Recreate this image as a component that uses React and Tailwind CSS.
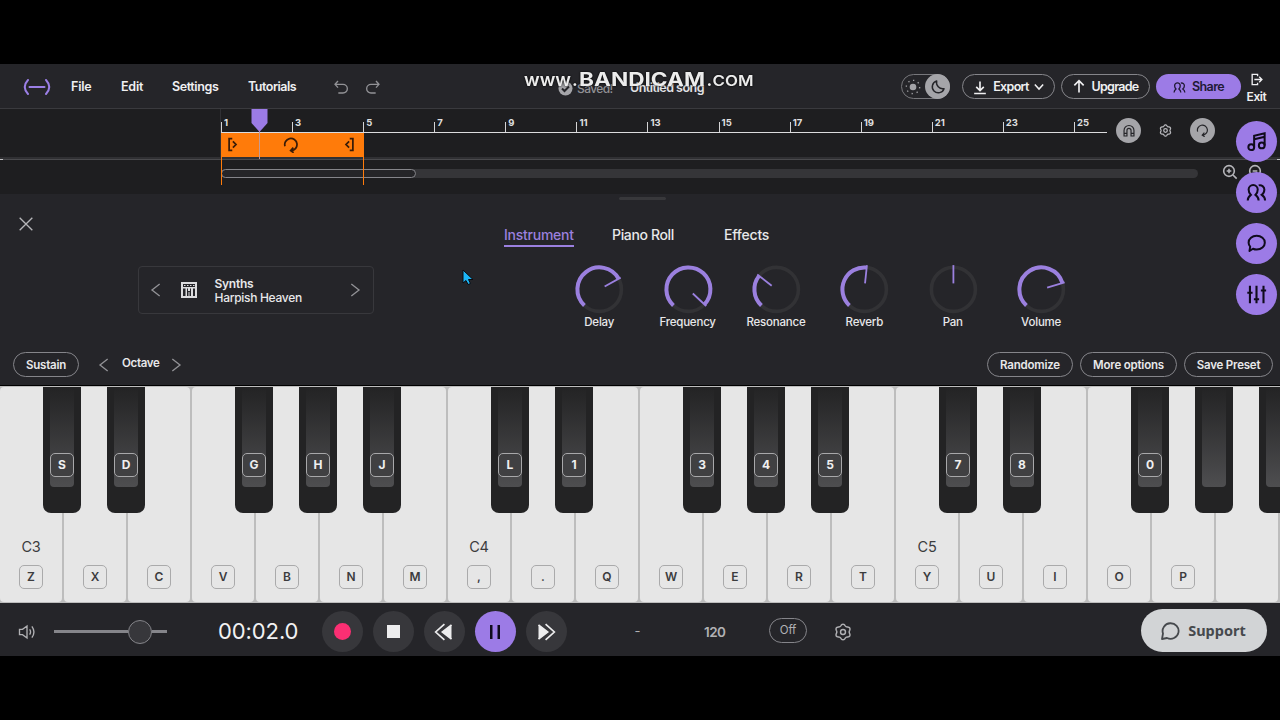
import React from 'react';

const WHITE_KEYS = [
    { label: 'Z', note: 'C3', black: 'S' },
    { label: 'X', black: 'D' },
    { label: 'C' },
    { label: 'V', black: 'G' },
    { label: 'B', black: 'H' },
    { label: 'N', black: 'J' },
    { label: 'M' },
    { label: ',', note: 'C4', black: 'L' },
    { label: '.', black: '1' },
    { label: 'Q' },
    { label: 'W', black: '3' },
    { label: 'E', black: '4' },
    { label: 'R', black: '5' },
    { label: 'T' },
    { label: 'Y', note: 'C5', black: '7' },
    { label: 'U', black: '8' },
    { label: 'I' },
    { label: 'O', black: '0' },
    { label: 'P', black: ' ' },
    { black: ' ' },
    {},
];

const BARS = [1, 3, 5, 7, 9, 11, 13, 15, 17, 19, 21, 23, 25];

// angle: degrees clockwise from the top
const KNOBS = [
    { name: 'Delay', angle: 61 },
    { name: 'Frequency', angle: 133 },
    { name: 'Resonance', angle: -52 },
    { name: 'Reverb', angle: 6 },
    { name: 'Pan', angle: 0, center: true },
    { name: 'Volume', angle: 73 },
];

const Icon = ({ size = 16, w = 1.5, children, className = '' }) => (
    <svg width={size} height={size} viewBox="0 0 24 24" fill="none" stroke="currentColor" strokeWidth={w} className={`shrink-0 ${className}`}>
        {children}
    </svg>
);

const PeopleIcon = ({ size, w = 2 }) => (
    <Icon size={size} w={w}>
        <path d="M2 21c0-3.200 1.500-4.700 3.500-6.300C3.800 13.200 3 11.200 3 8.700a5.200 5.200 0 0 1 10.400 0c0 2.500-.8 4.500-2.500 6 2 1.600 3.500 3.100 3.500 6.300" />
        <path d="M14.500 3.900a5 5 0 0 1 6.500 4.800c0 2.500-.8 4.500-3 6 2.400 1.600 3.800 3.100 3.800 6.300" />
    </Icon>
);

const BubbleIcon = ({ size, w = 2 }) => (
    <Icon size={size} w={w}>
        <path strokeLinejoin="round" d="M4 20.500l.8-5C3.600 14.200 3 12.700 3 11c0-4.400 4-7.800 9.200-7.800S21.500 6.600 21.500 11s-4 7.900-9.200 7.900c-1.600 0-3-.3-4.300-.9z" />
    </Icon>
);

// six-lobed outline
const GEAR_PATH = Array.from({ length: 72 }, (_, i) => {
    const a = (i * 5 * Math.PI) / 180;
    const r = 9.3 + 1.1 * Math.cos(6 * a);
    return `${i ? 'L' : 'M'}${(12 + r * Math.sin(a)).toFixed(2)} ${(12 - r * Math.cos(a)).toFixed(2)}`;
}).join('') + 'z';

const GearIcon = ({ size, w = 2 }) => (
    <Icon size={size} w={w}>
        <path strokeLinejoin="round" d={GEAR_PATH} />
        <circle cx="12" cy="12" r="3.300" />
    </Icon>
);

const LoopIcon = ({ size, w = 2 }) => (
    <Icon size={size} w={w}>
        <path d="M3 14A9.200 9.200 0 1 1 12.500 20.500M15.500 16l-4 4.500 4.500 3" />
    </Icon>
);

const Chevron = ({ size = 16, flip, w = 2 }) => (
    <Icon size={size} w={w} className={flip ? 'rotate-180' : ''}>
        <path d="M17.500 3L6 12l11.500 9" />
    </Icon>
);

const Pill = ({ className = '', children }) => (
    <button className={`flex shrink-0 items-center justify-center rounded-full border border-[#85858a] pt-[2px] text-[11.5px] font-semibold tracking-[-0.2px] ${className}`}>
        {children}
    </button>
);

const Watermark = () => (
    <svg width="236" height="24" viewBox="0 0 236 24" className="absolute left-[520px] top-[4px] [filter:drop-shadow(0_0_1px_#000)]" fontFamily="Inter, sans-serif" fill="#ececec">
        <text x="4" y="18" fontSize="18" fontWeight="600" textLength="47" lengthAdjust="spacingAndGlyphs">www</text>
        <text x="52" y="18" fontSize="18" fontWeight="600">.</text>
        <text x="59" y="18" fontSize="18.500" fontWeight="700" textLength="126" lengthAdjust="spacingAndGlyphs">BANDICAM</text>
        <text x="186.500" y="18" fontSize="18" fontWeight="600">.</text>
        <text x="192.500" y="18" fontSize="14" fontWeight="600" textLength="41" lengthAdjust="spacingAndGlyphs">COM</text>
    </svg>
);

const Header = () => (
    <header className="relative flex h-[45px] items-center border-b border-[#3a3a3e] bg-[#252529] pt-px text-[12.500px] font-semibold text-[#f0f0f2]">
        <svg width="28" height="18" viewBox="0 0 28 18" className="ml-[23px] shrink-0" fill="none" stroke="#9b7fe6" strokeWidth="2" strokeLinecap="round">
            <path d="M5 2Q-1.500 9 5 16M23 2Q29.500 9 23 16M6.500 9h15" />
        </svg>
        <nav className="flex pt-[2px]">
            <span className="ml-5 w-[50px] tracking-[-0.2px]">File</span>
            <span className="w-[51px] tracking-[-0.2px]">Edit</span>
            <span className="w-[76px] tracking-[-0.400px]">Settings</span>
            <span className="w-[85px] tracking-[-0.5px]">Tutorials</span>
        </nav>
        <div className="flex gap-4 text-[#929296]">
            <Icon size={16} w={2}><path d="M7.500 3L3 8l4.500 5M3 8h12a6.500 6.500 0 0 1 0 13H8" /></Icon>
            <Icon size={16} w={2}><path d="M16.500 3L21 8l-4.500 5M21 8H9a6.500 6.500 0 0 0 0 13h7" /></Icon>
        </div>
        <div className="ml-[177px] flex items-center pt-[4px] text-[#919195]">
            <svg width="15" height="15" viewBox="0 0 15 15"><circle cx="7.500" cy="7.500" r="7" fill="#a5a5a9" /><path d="M4 7.500l2.500 2.500L11 5.500" fill="none" stroke="#252529" strokeWidth="2" /></svg>
            <span className="ml-[4px] w-[53px] text-[12px] font-medium tracking-[-0.600px]">Saved!</span>
            <span className="w-[80px] whitespace-nowrap tracking-[-0.500px] text-[#e2e2e5]">Untitled song</span>
        </div>
        <div className="ml-auto flex items-center pr-[13px]">
            <div className="flex h-[25px] w-[49px] items-center justify-between rounded-full border border-[#77777b] pl-[3px]">
                <Icon size={16} w={2} className="text-[#a3a3a7]">
                    <circle cx="12" cy="12" r="4" fill="currentColor" />
                    <path strokeDasharray="2 5.850" d="M12 2a10 10 0 1 1 0 20a10 10 0 1 1 0-20" />
                </Icon>
                <span className="-mr-px flex size-[25px] items-center justify-center rounded-full bg-[#a5a5a9] text-[#252529]">
                    <Icon size={16} w={2.2}><path strokeLinejoin="round" d="M10 3a9 9 0 1 0 11 11.500A9.500 9.500 0 0 1 10 3z" /></Icon>
                </span>
            </div>
            <Pill className="ml-3 h-[25px] w-[93px] gap-[6px]">
                <Icon size={14} w={2.8}><path d="M12 1v15M5.500 10l6.500 6.500 6.500-6.500M2 21.500h20" /></Icon>
                <span className="text-[12.500px] tracking-[-0.700px]">Export</span>
                <Icon size={10} w={3.600} className="-ml-px -mt-px"><path d="M2 6l10 11L22 6" /></Icon>
            </Pill>
            <Pill className="ml-[6px] h-[25px] w-[89px] gap-[5px]">
                <Icon size={14} w={2.8} className="-mt-[4px]"><path d="M12 23V3M4 11l8-8 8 8" /></Icon>
                <span className="text-[12.500px] tracking-[-0.700px]">Upgrade</span>
            </Pill>
            <button className="ml-[6px] flex h-[25px] w-[85px] items-center justify-center gap-[6px] rounded-full bg-[#9c7be6] pt-[2px] tracking-[-0.600px] text-[#211a35]">
                <PeopleIcon size={13} w={2.4} />
                Share
            </button>
            <div className="ml-[5px] mt-[4px] flex w-[21px] flex-col items-center">
                <Icon size={13} w={2.500}><path d="M14 6V2.500H4v19h10V18M8 12h14M17 7l5 5-5 5" /></Icon>
                <span className="mt-[4px] text-[12px] leading-[14px] tracking-[-0.400px]">Exit</span>
            </div>
        </div>
    </header>
);

const Timeline = () => (
    <section className="relative h-[85px] bg-[#1e1e20]">
        <div className="flex h-12">
            <div className="ml-[220px] w-[887px] border-l border-[#303034]">
                <div className="flex h-6 items-end overflow-hidden border-b border-[#dcdcde]">
                    {BARS.map((bar) => (
                        <div key={bar} className="h-[10px] w-[71.080px] shrink-0 border-l border-[#d4d4d6]">
                            <span className="-mt-[5px] ml-[2px] block text-[9.500px] font-bold leading-[11px] text-[#dededf]">{bar}</span>
                        </div>
                    ))}
                </div>
                <div className="flex h-6 w-[143px] items-center justify-between bg-[#ff7b0a] pb-px pl-[5px] pr-[8px] text-[#3a1c08]">
                    <Icon size={15} w={2.8}><path d="M10 2.500H5v19h5M11 7l5 5-5 5" /></Icon>
                    <LoopIcon size={16} w={2.600} />
                    <Icon size={15} w={2.800}><path d="M14 2.500h5v19h-5M13 7l-5 5 5 5" /></Icon>
                </div>
            </div>
            <div className="ml-[9px] flex gap-[18px] pt-[9px]">
                <span className="flex size-[25px] items-center justify-center rounded-full bg-[#a5a5a9] text-[#252529]">
                    <Icon size={14} w={2}><path d="M3.500 20.500V11a8.500 8.500 0 0 1 17 0v9.500h-5V11a3.500 3.500 0 0 0-7 0v9.500zM3.500 16h5M15.500 16h5" /></Icon>
                </span>
                <span className="flex h-[25px] items-center text-[#b5b5b9]"><GearIcon size={13} w={2.4} /></span>
                <span className="flex size-[25px] items-center justify-center rounded-full bg-[#a5a5a9] text-[#252529]">
                    <LoopIcon size={13} w={2.200} />
                </span>
            </div>
        </div>
        <div className="flex h-[3px] items-end justify-between border-b border-[#4a4a4d] bg-[#303033]">
            <span className="h-px w-[3px] translate-y-px bg-[#c2c2c4]" />
            <span className="h-px w-[3px] translate-y-px bg-[#c2c2c4]" />
        </div>
        <div className="flex items-start">
            <div className="ml-[221px] mt-[9px] h-[9px] w-[977px] rounded-full bg-[#353538]">
                <div className="h-[9px] w-[195px] rounded-full border border-[#85858a] bg-[#252528]" />
            </div>
            <div className="ml-[24px] mt-[4px] flex gap-[10px] text-[#b5b5b9]">
                <Icon size={16} w={2.400}><path d="M16.500 16.500L22 22M7 10.500h7M10.500 7v7" /><circle cx="10.500" cy="10.500" r="8" /></Icon>
                <Icon size={16} w={2.400}><path d="M16.500 16.500L22 22M7 10.500h7" /><circle cx="10.500" cy="10.500" r="8" /></Icon>
            </div>
        </div>
        {/* loop bounds and playhead lie over the ruler */}
        <div className="absolute left-[221px] top-12 h-7 w-px bg-[#ff7b0a]" />
        <div className="absolute left-[363px] top-12 h-7 w-px bg-[#ff7b0a]" />
        <svg width="17" height="52" viewBox="0 0 17 52" className="absolute left-[251px] top-0">
            <path d="M8 22h1v28H8z" fill="#c39a94" />
            <path d="M.5 0h16v14l-8 9-8-9z" fill="#9c7be6" />
        </svg>
    </section>
);

const point = (deg, r) => {
    const a = (deg * Math.PI) / 180;
    return `${(26.4 + r * Math.sin(a)).toFixed(2)} ${(26.4 - r * Math.cos(a)).toFixed(2)}`;
};

const Knob = ({ name, angle, center }) => (
    <div className="flex w-[88.400px] flex-col items-center">
        <svg width="52" height="52" viewBox="0 0 52 52" fill="none">
            <circle cx="26.400" cy="26.400" r="22" stroke="#323235" strokeWidth="3.600" />
            {!center && (
                <path d={`M${point(-137, 22)}A22 22 0 ${angle + 137 > 180 ? 1 : 0} 1 ${point(angle, 22)}`} stroke="#9b80df" strokeWidth="4" />
            )}
            <path d={`M${point(angle, 6)}L${point(angle, 24.3)}`} stroke="#9b80df" strokeWidth="1.800" />
        </svg>
        <span className="text-[11.500px] font-medium leading-[15px] tracking-[-0.200px]">{name}</span>
    </div>
);

const InstrumentPanel = () => (
    <section className="relative h-[191px] bg-[#252529] text-[#e8e8ea]">
        <div className="mx-auto h-[3px] w-[47px] translate-x-[2px] translate-y-[3px] rounded bg-[#38383b]" />
        <div className="flex h-[66px]">
            <Icon size={16} w={2} className="ml-[17.500px] mt-[19px] text-[#b6b6b9]"><path d="M2.500 2.500l19 19M21.500 2.500l-19 19" /></Icon>
            <div className="ml-[470.500px] flex items-start pt-[28px] text-[14px] font-medium leading-[20px]">
                <span className="w-[70px] whitespace-nowrap border-b-2 border-[#9b80df] tracking-[-0.250px] text-[#9b80df]">Instrument</span>
                <span className="ml-[38px] w-[112px] tracking-[-0.350px]">Piano Roll</span>
                <span className="tracking-[-0.200px]">Effects</span>
            </div>
        </div>
        <div className="flex h-[87px]">
            <div className="ml-[138px] mt-[3px] flex h-[48px] w-[236px] items-center rounded border border-[#38383c] pl-[9px] pr-[10px] text-[#929296]">
                <Chevron size={16} w={2} />
                <svg width="16" height="16" viewBox="0 0 16 16" className="ml-[17px]" fill="#dcdcde">
                    <path fillRule="evenodd" d="M0 0h16v16H0zM2 2v3h12V2zM2 6.500V14h2.500V6.500zM6 6.500V14h1.500v-4h1V14H10V6.500H9V9H7V6.500zM12 6.500V14h2V6.500z" />
                    <path d="M3 3h1.500v1H3zM6 3h1.500v1H6zM9 3h1.500v1H9zM12 3h1.500v1H12z" />
                </svg>
                <div className="ml-[17.500px] flex-1 pt-[2px] text-[12px] leading-[14px] text-[#e8e8ea]">
                    <p className="font-semibold tracking-[-0.250px]">Synths</p>
                    <p className="font-medium tracking-[-0.300px]">Harpish Heaven</p>
                </div>
                <Chevron size={16} flip w={2} />
            </div>
            <div className="ml-[181px] flex">
                {KNOBS.map((knob) => <Knob key={knob.name} {...knob} />)}
            </div>
        </div>
        <div className="flex h-[28px] items-center px-[13px] pr-[7px] pt-px">
            <Pill className="h-[25px] w-[66px]">Sustain</Pill>
            <span className="ml-[17px] text-[#929296]"><Chevron size={16} /></span>
            <span className="mx-[6px] -mt-px w-[44px] pl-[4px] text-[11.500px] font-semibold tracking-[-0.300px]">Octave</span>
            <span className="text-[#929296]"><Chevron size={16} flip /></span>
            <div className="ml-auto flex gap-[7px]">
                <Pill className="h-[25px] w-[86px]">Randomize</Pill>
                <Pill className="h-[25px] w-[97px]">More options</Pill>
                <Pill className="h-[25px] w-[89px]">Save Preset</Pill>
            </div>
        </div>
        <svg width="12" height="17" viewBox="0 0 12 17" className="absolute left-[462px] top-[75px]">
            <path d="M1 1v13l3-2.500 2 4 2.500-1-2-4H11z" fill="#1cb4f4" stroke="#0b0b10" />
        </svg>
    </section>
);

const Piano = () => (
    <section className="h-[218px] overflow-hidden border-t border-black bg-[#bdbdbd] pb-px pt-px">
        <div className="-ml-px flex h-full w-[1344px]">
            {WHITE_KEYS.map((key, i) => (
                <div key={i} className="relative flex h-full w-16 flex-col items-center justify-end px-px">
                    <div className="flex h-full w-full flex-col items-center justify-end rounded bg-[#e6e6e6] pb-[13px] text-[#3c3c3e]">
                        {key.note && <span className="mb-[8px] text-[14.500px] leading-5 tracking-[-0.200px]">{key.note}</span>}
                        {key.label && (
                            <span className="flex size-[24px] items-center justify-center rounded-[5px] border border-[#aaaaab] text-[12px] font-semibold">{key.label}</span>
                        )}
                    </div>
                    {key.black && (
                        <div className="absolute left-[44px] top-0 z-10 flex h-[126px] w-[38px] justify-center rounded-b-lg bg-[#232324]">
                            <div className="flex h-[100px] w-6 items-end rounded bg-gradient-to-b from-[#232324] to-[#4e4e50] pb-[10px]">
                                {key.black !== ' ' && (
                                    <span className="flex size-6 items-center justify-center rounded-[5px] border border-[#a8a8aa] bg-[#404042] text-[12px] font-bold text-[#efeff0]">{key.black}</span>
                                )}
                            </div>
                        </div>
                    )}
                </div>
            ))}
        </div>
    </section>
);

const RoundButton = ({ active, children }) => (
    <button className={`flex size-[41px] items-center justify-center rounded-full ${active ? 'bg-[#9c7be6] text-[#100b1c]' : 'bg-[#37373b] text-[#ededee]'}`}>
        {children}
    </button>
);

const Transport = () => (
    <footer className="flex h-[53px] items-center bg-[#252529] pt-[4px] text-[#b1b1b4]">
        <Icon size={18} w={1.800} className="ml-[18px]"><path d="M2 8.500h4l6-4.500v16l-6-4.500H2zM15.500 8.500q2.500 3.500 0 7M18.500 4.500q5.500 7.500 0 15" /></Icon>
        <div className="ml-[18px] flex w-[113px] items-center">
            <div className="h-[3px] w-[74px] bg-[#85858a]" />
            <div className="size-[24px] rounded-full border-[1.500px] border-[#85858a] bg-[#37373b]" />
            <div className="h-[3px] flex-1 bg-[#85858a]" />
        </div>
        <span className="ml-[51px] w-[84px] text-[22px] tracking-[-0.100px] text-[#f2f2f3]">00:02.0</span>
        <div className="ml-[19.500px] flex gap-[10px]">
            <RoundButton><span className="size-[17px] rounded-full bg-[#fb2f73]" /></RoundButton>
            <RoundButton><span className="size-[13px] bg-[#ededee]" /></RoundButton>
            <RoundButton>
                <Icon size={20} w={2}><path d="M21 3.500v17L10 12z" fill="currentColor" stroke="none" /><path d="M21 3.500L10 12l11 8.500M12.500 2.500L2 12l10.500 9.500" /></Icon>
            </RoundButton>
            <RoundButton active>
                <Icon size={20} w={3}><path d="M7.500 3.500v17M16.500 3.500v17" /></Icon>
            </RoundButton>
            <RoundButton>
                <Icon size={20} w={2}><path d="M3 3.500v17L14 12z" fill="currentColor" stroke="none" /><path d="M3 3.500L14 12 3 20.500M11.500 2.500L22 12l-10.500 9.500" /></Icon>
            </RoundButton>
        </div>
        <span className="ml-[68px] w-[69.500px] text-[13px]">-</span>
        <span className="w-[65px] pt-px text-[13.500px] font-semibold tracking-[-0.500px]">120</span>
        <Pill className="-mt-[3px] h-[25px] w-[38px] !font-normal">Off</Pill>
        <span className="ml-[27px]"><GearIcon size={18} w={1.900} /></span>
        <button className="-mt-[3px] ml-auto mr-[13px] flex h-[43px] w-[126px] items-center justify-center gap-[8px] rounded-full bg-[#d2d4d6] pr-[2px] pt-px font-['Noto_Sans'] text-[14.500px] font-bold text-[#46494d]">
            <svg width="20" height="20" viewBox="0 0 20 20" fill="none" stroke="currentColor" strokeWidth="1.800" strokeLinejoin="round">
                <path d="M2 18l1-5.500A8 7.800 0 1 1 7 17z" />
            </svg>
            Support
        </button>
    </footer>
);

const SideButtons = () => (
    <aside className="absolute right-[3px] top-[120.500px] z-20 flex flex-col gap-[10px]">
        <RoundButton active>
            <Icon size={21} w={2.300}><circle cx="6" cy="18.500" r="3.300" /><circle cx="18" cy="16.500" r="3.300" /><path d="M9.300 18.500V5.500l12-3v14M9.500 9.500l12-3" /></Icon>
        </RoundButton>
        <RoundButton active><PeopleIcon size={21} w={2.300} /></RoundButton>
        <RoundButton active><BubbleIcon size={21} w={2.300} /></RoundButton>
        <RoundButton active>
            <Icon size={21} w={2.400}><path d="M4.500 2v20M12 2v20M20 2v20M1.500 10h6M9 17.500h6M17 7.500h6" /></Icon>
        </RoundButton>
    </aside>
);

export default function App() {
    return (
        <div className="relative h-[720px] w-[1280px] overflow-hidden bg-black py-16 font-[Inter,sans-serif]">
            <div className="relative">
                <Header />
                <Watermark />
            </div>
            <Timeline />
            <InstrumentPanel />
            <Piano />
            <Transport />
            <SideButtons />
        </div>
    );
}
